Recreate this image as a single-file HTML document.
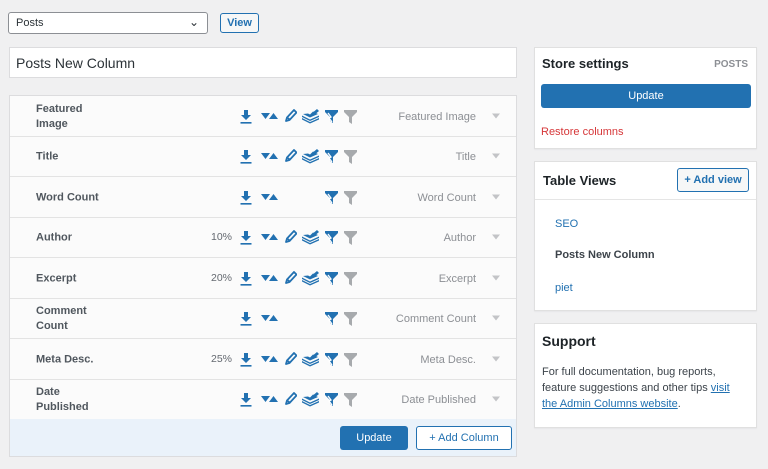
<!DOCTYPE html>
<html><head><meta charset="utf-8"><style>
*{box-sizing:border-box;margin:0;padding:0}
body{width:768px;height:469px;background:#f0f0f1;font-family:"Liberation Sans",sans-serif;position:relative;overflow:hidden;color:#1d2327}
.abs{position:absolute}
.sel{left:8px;top:12px;width:200px;height:22px;background:#fff;border:1px solid #8c8f94;border-radius:3px;font-size:11px;padding:4px 7px;color:#2c3338}
.view{left:220px;top:13px;width:39px;height:20px;border:1px solid #2271b1;border-radius:3px;color:#2271b1;font-size:11px;font-weight:bold;text-align:center;line-height:18px;background:#f6f7f7}
.title{left:9px;top:47px;width:508px;height:31px;background:#fff;border:1px solid #dcdcde;font-size:14px;padding:7px 6px;color:#2c3338}
.box{left:9px;top:95px;width:508px;height:362px;background:#fbfbfb;border:1px solid #dcdcde}
.row{position:absolute;left:0;width:506px;height:41px;border-bottom:1px solid #e3e3e3}
.lab{position:absolute;left:26px;top:50%;transform:translateY(-50%);font-size:11px;font-weight:bold;color:#50575e;line-height:15px;margin-top:1px}
.rt{position:absolute;right:40px;top:50%;transform:translateY(-50%);font-size:11px;color:#8c8f94;margin-top:1px}
.car{position:absolute;right:16px;top:50%;transform:translateY(-50%);width:0;height:0;border-left:4px solid transparent;border-right:4px solid transparent;border-top:5px solid #c3c4c7}
.pct{position:absolute;right:284px;top:50%;transform:translateY(-50%);font-size:10.5px;color:#646970}
.ic{position:absolute;left:220px;top:50%;margin-top:-8px}
.foot{left:0;top:323px;width:506px;height:37px;background:#eaf2fa;position:absolute}
.btnp{position:absolute;background:#2271b1;color:#fff;border-radius:3px;font-size:11px;text-align:center}
.btno{position:absolute;border:1px solid #2271b1;color:#2271b1;border-radius:3px;font-size:11px;text-align:center;background:#fff}
.card{position:absolute;left:534px;width:223px;background:#fff;border:1px solid #e0e0e0;box-shadow:0 1px 1px rgba(0,0,0,.04)}
h3{font-size:13px;font-weight:bold;color:#1d2327}
a{color:#2271b1}
</style></head><body>
<svg width="0" height="0" style="position:absolute">
<defs>
<symbol id="dl" viewBox="0 0 12 16"><path d="M4 2h4v5h3L6 12 1 7h3z M0.5 14h11v1.6H0.5z" fill="#2271b1"/></symbol>
<symbol id="so" viewBox="0 0 17 16"><path d="M0 5h9l-4.5 6z M8 11l4.5-6 4.5 6z" fill="#2271b1"/></symbol>
<symbol id="pe" viewBox="0 0 12 16"><path d="M9 2l2.5 2.5-7 7.5L1 13l1-3.5z M3 10l2 2" fill="none" stroke="#2271b1" stroke-width="1.8" stroke-linejoin="round"/></symbol>
<symbol id="st" viewBox="0 0 17 16"><path d="M0 10l8 4 9-4v1.5l-9 4-8-4z M0 7.5l8 4 9-4v1.5l-9 4-8-4z" fill="#2271b1"/><path d="M1 6l7 3.5 8-3.5-5-2.5-3 3 -2-1z" fill="#2271b1"/><path d="M9 6l6-5 2 2-6 5z" fill="#2271b1"/></symbol>
<symbol id="fb" viewBox="0 0 13 16"><path d="M0 2h13v2l-5 5v6l-3-2V9L0 4z" fill="#2271b1"/><path d="M3 5l3 4-2 1 3 4" stroke="#fff" stroke-width="1.3" fill="none"/></symbol>
<symbol id="fg" viewBox="0 0 13 16"><path d="M0 2h13v2l-5 5v7l-3-2V9L0 4z" fill="#a7aaad"/></symbol>
</defs></svg>

<div class="abs sel">Posts<span style="position:absolute;right:8px;top:2px;font-size:12px">&#8964;</span></div>
<div class="abs view">View</div>
<div class="abs title">Posts New Column</div>

<div class="abs box">
 <div class="row" style="top:0"><div class="lab">Featured<br>Image</div>
  <svg class="ic" width="130" height="16"><use href="#dl" x="10" width="12" height="16"/><use href="#so" x="31" width="17" height="16"/><use href="#pe" x="55" width="12" height="16"/><use href="#st" x="72" width="17" height="16"/><use href="#fb" x="95" width="13" height="16"/><use href="#fg" x="114" width="13" height="16"/></svg>
  <div class="rt">Featured Image</div><div class="car"></div></div>
 <div class="row" style="top:40px"><div class="lab">Title</div>
  <svg class="ic" width="130" height="16"><use href="#dl" x="10" width="12" height="16"/><use href="#so" x="31" width="17" height="16"/><use href="#pe" x="55" width="12" height="16"/><use href="#st" x="72" width="17" height="16"/><use href="#fb" x="95" width="13" height="16"/><use href="#fg" x="114" width="13" height="16"/></svg>
  <div class="rt">Title</div><div class="car"></div></div>
 <div class="row" style="top:81px"><div class="lab">Word Count</div>
  <svg class="ic" width="130" height="16"><use href="#dl" x="10" width="12" height="16"/><use href="#so" x="31" width="17" height="16"/><use href="#fb" x="95" width="13" height="16"/><use href="#fg" x="114" width="13" height="16"/></svg>
  <div class="rt">Word Count</div><div class="car"></div></div>
 <div class="row" style="top:121px"><div class="lab">Author</div><div class="pct">10%</div>
  <svg class="ic" width="130" height="16"><use href="#dl" x="10" width="12" height="16"/><use href="#so" x="31" width="17" height="16"/><use href="#pe" x="55" width="12" height="16"/><use href="#st" x="72" width="17" height="16"/><use href="#fb" x="95" width="13" height="16"/><use href="#fg" x="114" width="13" height="16"/></svg>
  <div class="rt">Author</div><div class="car"></div></div>
 <div class="row" style="top:162px"><div class="lab">Excerpt</div><div class="pct">20%</div>
  <svg class="ic" width="130" height="16"><use href="#dl" x="10" width="12" height="16"/><use href="#so" x="31" width="17" height="16"/><use href="#pe" x="55" width="12" height="16"/><use href="#st" x="72" width="17" height="16"/><use href="#fb" x="95" width="13" height="16"/><use href="#fg" x="114" width="13" height="16"/></svg>
  <div class="rt">Excerpt</div><div class="car"></div></div>
 <div class="row" style="top:202px"><div class="lab">Comment<br>Count</div>
  <svg class="ic" width="130" height="16"><use href="#dl" x="10" width="12" height="16"/><use href="#so" x="31" width="17" height="16"/><use href="#fb" x="95" width="13" height="16"/><use href="#fg" x="114" width="13" height="16"/></svg>
  <div class="rt">Comment Count</div><div class="car"></div></div>
 <div class="row" style="top:243px"><div class="lab">Meta Desc.</div><div class="pct">25%</div>
  <svg class="ic" width="130" height="16"><use href="#dl" x="10" width="12" height="16"/><use href="#so" x="31" width="17" height="16"/><use href="#pe" x="55" width="12" height="16"/><use href="#st" x="72" width="17" height="16"/><use href="#fb" x="95" width="13" height="16"/><use href="#fg" x="114" width="13" height="16"/></svg>
  <div class="rt">Meta Desc.</div><div class="car"></div></div>
 <div class="row" style="top:283px"><div class="lab">Date<br>Published</div>
  <svg class="ic" width="130" height="16"><use href="#dl" x="10" width="12" height="16"/><use href="#so" x="31" width="17" height="16"/><use href="#pe" x="55" width="12" height="16"/><use href="#st" x="72" width="17" height="16"/><use href="#fb" x="95" width="13" height="16"/><use href="#fg" x="114" width="13" height="16"/></svg>
  <div class="rt">Date Published</div><div class="car"></div></div>
 <div class="foot">
  <div class="btnp" style="left:330px;top:7px;width:68px;height:24px;line-height:24px">Update</div>
  <div class="btno" style="left:406px;top:7px;width:96px;height:24px;line-height:22px">+ Add Column</div>
 </div>
</div>

<div class="card" style="top:47px;height:102px">
 <h3 class="abs" style="left:7px;top:8px">Store settings</h3>
 <div class="abs" style="right:8px;top:11px;font-size:10px;font-weight:bold;color:#8c8f94">POSTS</div>
 <div class="btnp" style="left:6px;top:36px;width:210px;height:24px;line-height:24px">Update</div>
 <div class="abs" style="left:6px;top:78px;font-size:11px;color:#d63638">Restore columns</div>
</div>

<div class="card" style="top:161px;height:150px">
 <h3 class="abs" style="left:8px;top:11px">Table Views</h3>
 <div class="btno" style="left:142px;top:6px;width:72px;height:24px;line-height:22px;font-weight:bold;background:#f6f7f7">+ Add view</div>
 <div class="abs" style="left:0;top:37px;width:221px;border-top:1px solid #e5e5e5"></div>
 <div class="abs" style="left:20px;top:56px;font-size:11px;color:#2271b1">SEO</div>
 <div class="abs" style="left:20px;top:87px;font-size:11px;font-weight:bold;color:#3c434a">Posts New Column</div>
 <div class="abs" style="left:20px;top:120px;font-size:11px;color:#2271b1">piet</div>
</div>

<div class="card" style="top:323px;height:105px">
 <h3 class="abs" style="left:7px;top:9px;font-size:14px">Support</h3>
 <div class="abs" style="left:7px;top:40px;width:196px;font-size:11px;line-height:16px;color:#3c434a">For full documentation, bug reports, feature suggestions and other tips <a href="#">visit the Admin Columns website</a>.</div>
</div>
</body></html>
